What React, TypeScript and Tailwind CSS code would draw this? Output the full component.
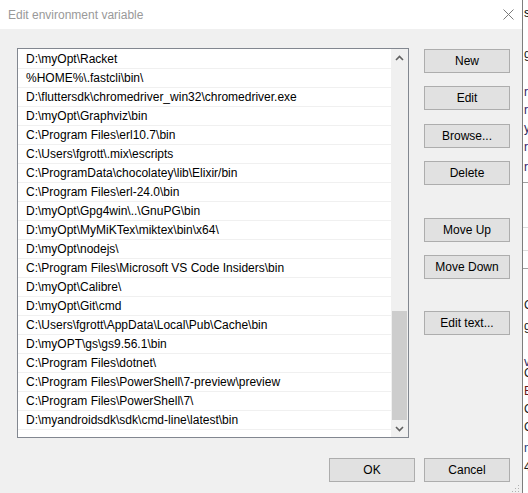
import React from "react";

const items = [
  "D:\\myOpt\\Racket",
  "%HOME%\\.fastcli\\bin\\",
  "D:\\fluttersdk\\chromedriver_win32\\chromedriver.exe",
  "D:\\myOpt\\Graphviz\\bin",
  "C:\\Program Files\\erl10.7\\bin",
  "C:\\Users\\fgrott\\.mix\\escripts",
  "C:\\ProgramData\\chocolatey\\lib\\Elixir/bin",
  "C:\\Program Files\\erl-24.0\\bin",
  "D:\\myOpt\\Gpg4win\\..\\GnuPG\\bin",
  "D:\\myOpt\\MyMiKTex\\miktex\\bin\\x64\\",
  "D:\\myOpt\\nodejs\\",
  "C:\\Program Files\\Microsoft VS Code Insiders\\bin",
  "D:\\myOpt\\Calibre\\",
  "D:\\myOpt\\Git\\cmd",
  "C:\\Users\\fgrott\\AppData\\Local\\Pub\\Cache\\bin",
  "D:\\myOPT\\gs\\gs9.56.1\\bin",
  "C:\\Program Files\\dotnet\\",
  "C:\\Program Files\\PowerShell\\7-preview\\preview",
  "C:\\Program Files\\PowerShell\\7\\",
  "D:\\myandroidsdk\\sdk\\cmd-line\\latest\\bin",
];

function Btn({ label, className = "" }: { label: string; className?: string }) {
  return (
    <button
      className={
        "w-[86px] h-[24px] shrink-0 border border-[#adadad] bg-[#e1e1e1] text-black text-[12px] leading-none flex items-center justify-center " +
        className
      }
    >
      {label}
    </button>
  );
}

function Chevron({ up }: { up: boolean }) {
  return (
    <svg width="9" height="6" viewBox="0 0 9 6">
      <path
        d={up ? "M1 5 L4.5 1.5 L8 5" : "M1 1 L4.5 4.5 L8 1"}
        fill="none"
        stroke="#606060"
        strokeWidth="1.6"
      />
    </svg>
  );
}

const strip: { t: string; y: number; c: string }[] = [
  { t: "s", y: 8, c: "#000" },
  { t: "g", y: 49, c: "#1a1a1a" },
  { t: "r", y: 87, c: "#3a2466" },
  { t: "r", y: 105, c: "#3a2466" },
  { t: "y", y: 123, c: "#2c2a60" },
  { t: "r", y: 142, c: "#3a2466" },
  { t: "r", y: 162, c: "#3a2466" },
  { t: "C", y: 300, c: "#1a1a1a" },
  { t: "g", y: 321, c: "#1a1a1a" },
  { t: "v", y: 357, c: "#2c2a60" },
  { t: "C", y: 368, c: "#1a1a1a" },
  { t: "E", y: 386, c: "#6b1c1c" },
  { t: "C", y: 404, c: "#1a1a1a" },
  { t: "C", y: 422, c: "#1a1a1a" },
  { t: "n", y: 443, c: "#1d3c7a" },
  { t: "4", y: 462, c: "#1a1a1a" },
];

export default function App() {
  return (
    <div className="w-[528px] h-[493px] flex overflow-hidden bg-white text-[12px] font-['Liberation_Sans',Arial,sans-serif]">
      <div className="relative w-[522px] h-full flex flex-col bg-[#f0f0f0] shrink-0">
        <div className="h-[29px] bg-white flex items-center justify-between pl-[8px] pr-[8px]">
          <span className="text-[#999999]">Edit environment variable</span>
          <svg width="11" height="11" viewBox="0 0 11 11">
            <path d="M0.5 0.5 L10.5 10.5 M10.5 0.5 L0.5 10.5" stroke="#7a7a7a" strokeWidth="1" fill="none" />
          </svg>
        </div>

        <div className="flex pl-[17px] pt-[19px]">
          <div className="w-[392px] h-[390px] border border-[#828790] bg-white flex">
            <div className="flex-1 pt-px">
              {items.map((it) => (
                <div
                  key={it}
                  className="h-[19px] border-b border-[#f0f0f0] pl-[8px] leading-[19px] text-black whitespace-nowrap overflow-hidden"
                >
                  {it}
                </div>
              ))}
            </div>
            <div className="w-[17px] bg-[#f0f0f0] flex flex-col">
              <div className="h-[17px] flex items-center justify-center">
                <Chevron up />
              </div>
              <div className="flex-1 flex flex-col justify-end">
                <div className="h-[109px] mx-px bg-[#cdcdcd]" />
              </div>
              <div className="h-[17px] flex items-center justify-center">
                <Chevron up={false} />
              </div>
            </div>
          </div>

          <div className="ml-[15px] flex flex-col pt-px">
            <Btn label="New" />
            <Btn label="Edit" className="mt-[13px]" />
            <Btn label="Browse..." className="mt-[14px]" />
            <Btn label="Delete" className="mt-[13px]" />
            <Btn label="Move Up" className="mt-[33px]" />
            <Btn label="Move Down" className="mt-[13px]" />
            <Btn label="Edit text..." className="mt-[32px]" />
          </div>
        </div>

        <div className="flex pl-[329px] gap-[9px] mt-[20px]">
          <Btn label="OK" />
          <Btn label="Cancel" />
        </div>

        <svg className="absolute right-[2px] bottom-0" width="8" height="8" viewBox="0 0 8 8">
          <rect x="6" y="0" width="1" height="1" fill="#b0b0b0" />
          <rect x="3" y="3" width="1" height="1" fill="#b0b0b0" />
          <rect x="6" y="3" width="1" height="1" fill="#b0b0b0" />
          <rect x="0" y="6" width="1" height="1" fill="#b0b0b0" />
          <rect x="3" y="6" width="1" height="1" fill="#b0b0b0" />
          <rect x="6" y="6" width="1" height="1" fill="#b0b0b0" />
        </svg>
      </div>

      <div className="w-px h-full bg-[#7d7d7d] shrink-0" />

      <div className="relative flex-1 h-full bg-white overflow-hidden">
        <div className="absolute left-0 right-0 top-[182px] h-px bg-[#a0a0a0]" />
        <div className="absolute left-0 right-0 top-[227px] h-px bg-[#dcdcdc]" />
        <div className="absolute left-0 right-0 top-[250px] h-px bg-[#dcdcdc]" />
        <div className="absolute left-0 right-0 top-[268px] h-px bg-[#a0a0a0]" />
        {strip.map((s, i) => (
          <span
            key={i}
            className="absolute left-[1px] leading-[10px] text-[12px]"
            style={{ top: s.y, color: s.c }}
          >
            {s.t}
          </span>
        ))}
      </div>
    </div>
  );
}
